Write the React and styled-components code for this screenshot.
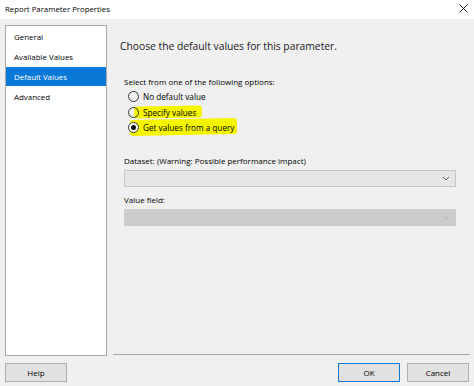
import React, { useState } from 'react'
import styled, { createGlobalStyle, css } from 'styled-components'

const GlobalStyle = createGlobalStyle`
  html, body {
    margin: 0;
    padding: 0;
    background: #ffffff;
  }
  body {
    font-family: "Open Sans", "Noto Sans", "Liberation Sans", sans-serif;
    color: #000;
  }
`

const pages = ['General', 'Available Values', 'Default Values', 'Advanced']

const options = [
  { id: 'none', label: 'No default value' },
  { id: 'specify', label: 'Specify values', highlight: 'short' },
  { id: 'query', label: 'Get values from a query', highlight: 'long' },
]

function Chevron({ disabled }) {
  return (
    <svg width="8" height="5" viewBox="0 0 8 5">
      <path
        d="M1 1 L4 4 L7 1"
        fill="none"
        stroke={disabled ? '#b4b4b4' : '#606060'}
        strokeWidth="1"
      />
    </svg>
  )
}

export default function App() {
  const [page, setPage] = useState('Default Values')
  const [choice, setChoice] = useState('query')

  return (
    <Dialog>
      <GlobalStyle />
      <TitleBar>
        <Title>Report Parameter Properties</Title>
        <CloseButton aria-label="Close">
          <svg width="9" height="9" viewBox="0 0 9 9">
            <path d="M0.5 0.5 L8.5 8.5 M8.5 0.5 L0.5 8.5" stroke="#222" strokeWidth="1" />
          </svg>
        </CloseButton>
      </TitleBar>

      <Body>
        <PageList>
          {pages.map((p) => (
            <PageItem key={p} $active={p === page} onClick={() => setPage(p)}>
              {p}
            </PageItem>
          ))}
        </PageList>

        <Panel>
          <Heading>Choose the default values for this parameter.</Heading>

          <Section>
            <SmallLabel>Select from one of the following options:</SmallLabel>
            <RadioGroup>
              {options.map((o) => (
                <RadioRow key={o.id} onClick={() => setChoice(o.id)}>
                  <Radio $checked={choice === o.id} />
                  <RadioText $highlight={o.highlight}>{o.label}</RadioText>
                </RadioRow>
              ))}
            </RadioGroup>
          </Section>

          <Field $top="19px">
            <SmallLabel>Dataset: (Warning: Possible performance impact)</SmallLabel>
            <Select>
              <Chevron />
            </Select>
          </Field>

          <Field $top="7px">
            <SmallLabel>Value field:</SmallLabel>
            <Select $disabled>
              <Chevron disabled />
            </Select>
          </Field>
        </Panel>
      </Body>

      <Footer>
        <Button>Help</Button>
        <Spacer />
        <Button $primary>OK</Button>
        <Button>Cancel</Button>
      </Footer>
    </Dialog>
  )
}

const Dialog = styled.div`
  width: 474px;
  height: 386px;
  display: flex;
  flex-direction: column;
  background: #f0f0f0;
  overflow: hidden;
`

const TitleBar = styled.div`
  height: 19px;
  flex-shrink: 0;
  background: #ffffff;
  display: flex;
  align-items: center;
  justify-content: space-between;
  padding: 0 6px 0 5px;
  box-sizing: border-box;
`

const Title = styled.div`
  font-size: 7.8px;
  color: #000;
  margin-top: -2px;
`

const CloseButton = styled.div`
  display: flex;
  align-items: center;
  margin-top: -3px;
`

const Body = styled.div`
  display: flex;
  flex-shrink: 0;
  padding: 6px 4px 0 5px;
  height: 337px;
  box-sizing: border-box;
`

const PageList = styled.div`
  width: 102px;
  background: #ffffff;
  border: 1px solid #a8a8a8;
  box-sizing: border-box;
  padding-top: 1px;
  display: flex;
  flex-direction: column;
  gap: 1px;
`

const PageItem = styled.div`
  height: 19px;
  display: flex;
  align-items: center;
  padding-left: 8px;
  font-size: 7.9px;
  color: #000;
  cursor: default;
  ${(p) =>
    p.$active &&
    css`
      background: #0a78d7;
      color: #ffffff;
    `}
`

const Panel = styled.div`
  flex: 1;
  margin-left: 6px;
  margin-bottom: 1px;
  border-bottom: 1px solid #a8a8a8;
  display: flex;
  flex-direction: column;
  padding: 12px 14px 0 7px;
`

const Heading = styled.div`
  font-size: 10.3px;
  color: #1a1a1a;
  height: 18px;
  line-height: 18px;
`

const Section = styled.div`
  margin-top: 21px;
  padding-left: 4px;
`

const SmallLabel = styled.div`
  font-size: 8px;
  color: #000;
  height: 12px;
  line-height: 12px;
`

const RadioGroup = styled.div`
  display: flex;
  flex-direction: column;
  padding: 1px 0 0 4px;
`

const RadioRow = styled.div`
  display: flex;
  align-items: center;
  gap: 4px;
  height: 15.5px;
`

const Radio = styled.span`
  position: relative;
  z-index: 1;
  width: 11px;
  height: 11px;
  border-radius: 50%;
  border: 1px solid #333;
  box-sizing: border-box;
  background: ${(p) => (p.$checked ? '#ffffff' : 'transparent')};
  display: flex;
  align-items: center;
  justify-content: center;
  &::after {
    content: '';
    width: 5px;
    height: 5px;
    border-radius: 50%;
    background: #111;
    display: ${(p) => (p.$checked ? 'block' : 'none')};
  }
`

const RadioText = styled.span`
  position: relative;
  z-index: 0;
  font-size: 8.2px;
  color: #000;
  ${(p) =>
    p.$highlight &&
    css`
      &::before {
        content: '';
        position: absolute;
        z-index: -1;
        background: #f5f500;
        left: ${p.$highlight === 'short' ? '-9px' : '-13px'};
        right: ${p.$highlight === 'short' ? '-6px' : '-3px'};
        top: ${p.$highlight === 'short' ? '-1px' : '-3px'};
        bottom: ${p.$highlight === 'short' ? '0px' : '-2px'};
        border-radius: 3px;
        transform: rotate(-1deg);
      }
    `}
`

const Field = styled.div`
  margin-top: ${(p) => p.$top};
  padding-left: 4px;
  display: flex;
  flex-direction: column;
  gap: 3px;
`

const Select = styled.div`
  height: 17px;
  box-sizing: border-box;
  border: 1px solid ${(p) => (p.$disabled ? '#cccccc' : '#c6c6c6')};
  background: ${(p) => (p.$disabled ? '#cccccc' : '#e6e6e6')};
  display: flex;
  align-items: center;
  justify-content: flex-end;
  padding-right: 5px;
`

const Footer = styled.div`
  display: flex;
  align-items: flex-start;
  gap: 7px;
  padding: 7px 5px 0 5px;
`

const Spacer = styled.div`
  flex: 1;
`

const Button = styled.button`
  width: 62px;
  height: 19px;
  box-sizing: border-box;
  font-family: "Open Sans", "Noto Sans", "Liberation Sans", sans-serif;
  font-size: 8px;
  color: #000;
  background: #e1e1e1;
  border: 1px solid ${(p) => (p.$primary ? '#0a78d7' : '#adadad')};
  padding: 0;
  cursor: default;
`
